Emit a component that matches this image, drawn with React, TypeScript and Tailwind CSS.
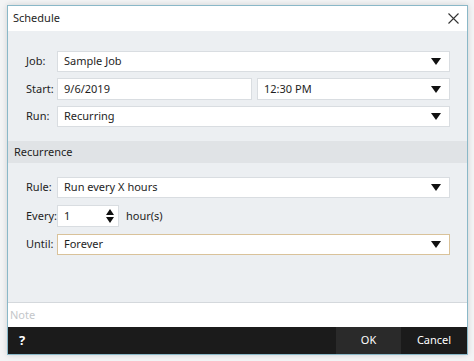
const font = { fontFamily: '"Noto Sans", "Open Sans", sans-serif' };

function Caret() {
    return (
        <svg width="10" height="7" viewBox="0 0 10 7" className="shrink-0">
            <path d="M0 0h10L5 7z" fill="#111" />
        </svg>
    );
}

function Select({ value, className = "", warm = false }: { value: string; className?: string; warm?: boolean }) {
    return (
        <div
            className={`h-[21px] flex items-center justify-between bg-white border pl-[6px] pr-[8px] ${warm ? "border-[#d9c29a]" : "border-[#d9dde1]"} ${className}`}
        >
            <span>{value}</span>
            <Caret />
        </div>
    );
}

function Row({ label, children }: { label: string; children: React.ReactNode }) {
    return (
        <div className="flex items-center">
            <span className="w-[49px] pl-[18px] shrink-0">{label}</span>
            <div className="flex-1 flex items-center gap-[5px]">{children}</div>
        </div>
    );
}

export default function App() {
    return (
        <div className="w-[474px] h-[361px] bg-[#f3f4f5] pt-[5px] pl-[7px] text-[11px] text-[#1e1e1e]" style={font}>
            <div className="w-[461px] h-[350px] flex flex-col border border-[#8ab8c8] shadow-[0_0_6px_rgba(0,0,0,0.15)]">
                {/* Title */}
                <div className="h-[25px] bg-white flex items-center justify-between pl-[5px] pr-[8px]">
                    <span>Schedule</span>
                    <svg width="11" height="11" viewBox="0 0 11 11">
                        <path d="M0.5 0.5l10 10M10.5 0.5l-10 10" stroke="#333" strokeWidth="1.1" />
                    </svg>
                </div>

                {/* Body */}
                <div className="flex-1 bg-[#eceff2] flex flex-col border-b border-[#d4d8dc]">
                    <div className="flex flex-col gap-[6px] pt-[20px] pr-[17px]">
                        <Row label="Job:">
                            <Select value="Sample Job" className="flex-1" />
                        </Row>
                        <Row label="Start:">
                            <div className="w-[195px] h-[22px] flex items-center bg-white border border-[#d9dde1] pl-[6px]">9/6/2019</div>
                            <Select value="12:30 PM" className="flex-1 h-[22px]" />
                        </Row>
                        <Row label="Run:">
                            <Select value="Recurring" className="flex-1" />
                        </Row>
                    </div>

                    <div className="mt-[14px] h-[22px] bg-[#e0e3e6] flex items-center pl-[6px]">Recurrence</div>

                    <div className="flex flex-col gap-[7px] pt-[14px] pr-[17px]">
                        <Row label="Rule:">
                            <Select value="Run every X hours" className="flex-1" />
                        </Row>
                        <Row label="Every:">
                            <div className="w-[62px] h-[22px] flex items-center justify-between bg-white border border-[#d9dde1] pl-[6px] pr-[4px]">
                                <span>1</span>
                                <svg width="8" height="14" viewBox="0 0 8 14">
                                    <path d="M4 0L8 6H0z M0 8h8l-4 6z" fill="#111" />
                                </svg>
                            </div>
                            <span className="ml-[2px]">hour(s)</span>
                        </Row>
                        <Row label="Until:">
                            <Select value="Forever" className="flex-1" warm />
                        </Row>
                    </div>
                </div>

                {/* Note */}
                <div className="h-[24px] bg-white flex items-center pl-[2px] text-[#c4c7ca]">Note</div>

                {/* Footer */}
                <div className="h-[27px] bg-[#1b1b1b] flex items-stretch text-white">
                    <span className="flex-1 flex items-center pl-[11px] font-bold text-[13px]">?</span>
                    <div className="w-[65px] bg-[#2a2a2a] flex items-center justify-center">OK</div>
                    <div className="w-[66px] flex items-center justify-center">Cancel</div>
                </div>
            </div>
        </div>
    );
}
